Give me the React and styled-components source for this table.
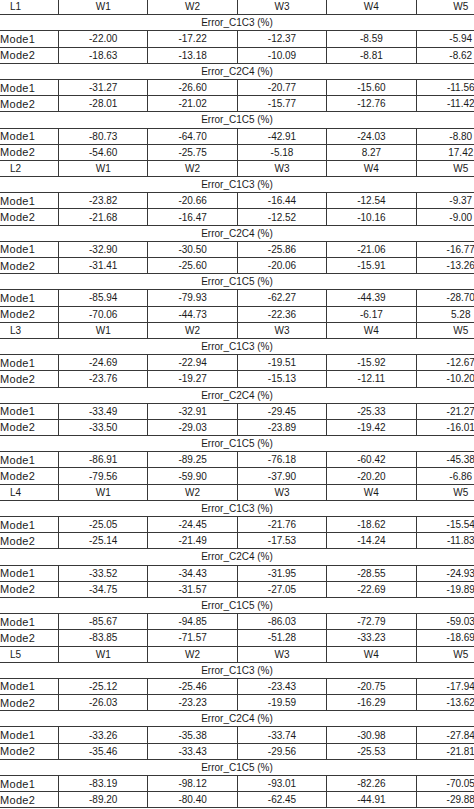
import styled, { createGlobalStyle } from "styled-components";

const GlobalStyle = createGlobalStyle`
  html, body {
    margin: 0;
    padding: 0;
    background: #ffffff;
  }
  body {
    font-family: "Liberation Sans", Arial, sans-serif;
  }
`;

const blocks = [
  {
    label: "L1",
    groups: [
      { name: "Error_C1C3 (%)", mode1: ["-22.00", "-17.22", "-12.37", "-8.59", "-5.94"], mode2: ["-18.63", "-13.18", "-10.09", "-8.81", "-8.62"] },
      { name: "Error_C2C4 (%)", mode1: ["-31.27", "-26.60", "-20.77", "-15.60", "-11.56"], mode2: ["-28.01", "-21.02", "-15.77", "-12.76", "-11.42"] },
      { name: "Error_C1C5 (%)", mode1: ["-80.73", "-64.70", "-42.91", "-24.03", "-8.80"], mode2: ["-54.60", "-25.75", "-5.18", "8.27", "17.42"] },
    ],
  },
  {
    label: "L2",
    groups: [
      { name: "Error_C1C3 (%)", mode1: ["-23.82", "-20.66", "-16.44", "-12.54", "-9.37"], mode2: ["-21.68", "-16.47", "-12.52", "-10.16", "-9.00"] },
      { name: "Error_C2C4 (%)", mode1: ["-32.90", "-30.50", "-25.86", "-21.06", "-16.77"], mode2: ["-31.41", "-25.60", "-20.06", "-15.91", "-13.26"] },
      { name: "Error_C1C5 (%)", mode1: ["-85.94", "-79.93", "-62.27", "-44.39", "-28.70"], mode2: ["-70.06", "-44.73", "-22.36", "-6.17", "5.28"] },
    ],
  },
  {
    label: "L3",
    groups: [
      { name: "Error_C1C3 (%)", mode1: ["-24.69", "-22.94", "-19.51", "-15.92", "-12.67"], mode2: ["-23.76", "-19.27", "-15.13", "-12.11", "-10.20"] },
      { name: "Error_C2C4 (%)", mode1: ["-33.49", "-32.91", "-29.45", "-25.33", "-21.27"], mode2: ["-33.50", "-29.03", "-23.89", "-19.42", "-16.01"] },
      { name: "Error_C1C5 (%)", mode1: ["-86.91", "-89.25", "-76.18", "-60.42", "-45.38"], mode2: ["-79.56", "-59.90", "-37.90", "-20.20", "-6.86"] },
    ],
  },
  {
    label: "L4",
    groups: [
      { name: "Error_C1C3 (%)", mode1: ["-25.05", "-24.45", "-21.76", "-18.62", "-15.54"], mode2: ["-25.14", "-21.49", "-17.53", "-14.24", "-11.83"] },
      { name: "Error_C2C4 (%)", mode1: ["-33.52", "-34.43", "-31.95", "-28.55", "-24.93"], mode2: ["-34.75", "-31.57", "-27.05", "-22.69", "-19.89"] },
      { name: "Error_C1C5 (%)", mode1: ["-85.67", "-94.85", "-86.03", "-72.79", "-59.03"], mode2: ["-83.85", "-71.57", "-51.28", "-33.23", "-18.69"] },
    ],
  },
  {
    label: "L5",
    groups: [
      { name: "Error_C1C3 (%)", mode1: ["-25.12", "-25.46", "-23.43", "-20.75", "-17.94"], mode2: ["-26.03", "-23.23", "-19.59", "-16.29", "-13.62"] },
      { name: "Error_C2C4 (%)", mode1: ["-33.26", "-35.38", "-33.74", "-30.98", "-27.84"], mode2: ["-35.46", "-33.43", "-29.56", "-25.53", "-21.81"] },
      { name: "Error_C1C5 (%)", mode1: ["-83.19", "-98.12", "-93.01", "-82.26", "-70.05"], mode2: ["-89.20", "-80.40", "-62.45", "-44.91", "-29.88"] },
    ],
  },
];

const headers = ["W1", "W2", "W3", "W4", "W5"];

function App() {
  return (
    <>
      <GlobalStyle />
      <Table>
        {blocks.map((block) => (
          <div key={block.label}>
            <Row>
              <LabelCell $header>{block.label}</LabelCell>
              {headers.map((h) => (
                <Cell key={h}>{h}</Cell>
              ))}
            </Row>
            {block.groups.map((group) => (
              <div key={group.name}>
                <SpanRow>{group.name}</SpanRow>
                <Row>
                  <LabelCell>Mode1</LabelCell>
                  {group.mode1.map((v, i) => (
                    <Cell key={i}>{v}</Cell>
                  ))}
                </Row>
                <Row>
                  <LabelCell>Mode2</LabelCell>
                  {group.mode2.map((v, i) => (
                    <Cell key={i}>{v}</Cell>
                  ))}
                </Row>
              </div>
            ))}
          </div>
        ))}
      </Table>
    </>
  );
}

export default App;

const Table = styled.div`
  width: 100vw;
  height: 809px;
  overflow: hidden;
  margin-top: -1px;
  color: #1a1a1a;
  font-size: 10px;
`;

const Row = styled.div`
  display: flex;
  height: 16.2px;
  box-sizing: border-box;
  border-bottom: 1px solid #383838;
`;

const SpanRow = styled.div`
  width: 100%;
  height: 16.2px;
  box-sizing: border-box;
  border-bottom: 1px solid #383838;
  display: flex;
  align-items: center;
  justify-content: center;
`;

const LabelCell = styled.div`
  flex: 0 0 59px;
  box-sizing: border-box;
  display: flex;
  align-items: center;
  font-size: ${(p) => (p.$header ? "10px" : "11px")};
  letter-spacing: ${(p) => (p.$header ? "0" : "0.3px")};
  padding-left: ${(p) => (p.$header ? "10px" : "0")};
  border-right: 1px solid #383838;
`;

const Cell = styled.div`
  flex: 0 0 89.4px;
  box-sizing: border-box;
  display: flex;
  align-items: center;
  justify-content: center;
  border-right: 1px solid #383838;
`;
